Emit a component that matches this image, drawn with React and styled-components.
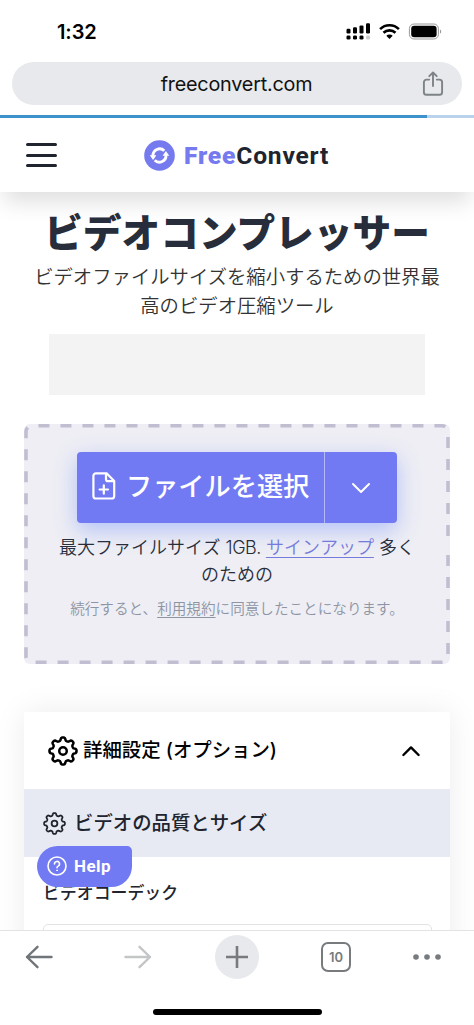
import React, { useState } from "react";
import styled, { createGlobalStyle, css } from "styled-components";

const GlobalStyle = createGlobalStyle`
  * {
    box-sizing: border-box;
  }

  body {
    margin: 0;
    background: #fff;
    font-family: "Inter", "Noto Sans CJK JP", sans-serif;
  }

  svg {
    display: block;
    flex: none;
  }
`;

const Screen = styled.div`
  display: flex;
  flex-direction: column;
  width: 474px;
  height: 1025px;
  overflow: hidden;
  background: #fff;
`;

/* browser chrome, top */

const StatusBar = styled.div`
  display: flex;
  align-items: center;
  justify-content: space-between;
  height: 62px;
  padding: 1px 32px 0 57px;
`;

const Clock = styled.div`
  font-size: 20px;
  font-weight: 600;
  letter-spacing: -0.1px;
  color: #000;
`;

const AddressBar = styled.div`
  display: flex;
  align-items: center;
  justify-content: center;
  height: 43px;
  margin: 0 12px;
  padding: 0 18px 0 39px;
  border-radius: 22px;
  background: #e7e9ec;
`;

const Address = styled.div`
  flex: 1;
  text-align: center;
  font-size: 19.8px;
  letter-spacing: -0.2px;
  color: #111;
`;

const Progress = styled.div`
  height: 3px;
  margin-top: 10px;
  background: #b9d3ec;
`;

const ProgressFill = styled.div`
  height: 100%;
  background: #3d92cb;
`;

/* page */

const Page = styled.main`
  position: relative;
  flex: 1;
  min-height: 0;
  overflow: hidden;
`;

const SiteHeader = styled.header`
  display: flex;
  align-items: center;
  height: 74px;
  padding: 0 26px;
  background: #fff;
  box-shadow: 0 14px 22px -4px rgba(0, 0, 0, 0.13);
`;

const MenuButton = styled.button`
  display: flex;
  flex-direction: column;
  justify-content: space-between;
  width: 31px;
  height: 24px;
  padding: 0;
  border: 0;
  background: none;

  span {
    height: 3px;
    border-radius: 2px;
    background: #20242e;
  }
`;

const Logo = styled.div`
  display: flex;
  align-items: center;
  gap: 9px;
  margin-left: 87px;
  font-family: "Roboto", sans-serif;
  font-size: 24.6px;
  font-weight: 700;
  letter-spacing: 0.8px;
  color: #20242e;

  b {
    color: #757bee;
  }
`;

const Hero = styled.section`
  display: flex;
  flex-direction: column;
  align-items: center;
  padding-top: 13px;
  text-align: center;
`;

const Title = styled.h1`
  margin: 0;
  font-size: 38.7px;
  font-weight: 900;
  line-height: 56px;
  color: #282d3b;
`;

const Subtitle = styled.p`
  width: 412px;
  margin: 2px 0 0;
  font-size: 19.35px;
  font-weight: 350;
  line-height: 29px;
  color: #333;
`;

const AdSlot = styled.div`
  width: 376px;
  height: 61px;
  margin-top: 13px;
  background: #f3f3f3;
`;

const DropZone = styled.section`
  position: relative;
  display: flex;
  flex-direction: column;
  align-items: center;
  width: 426px;
  height: 240px;
  margin: 29px auto 0;
  padding-top: 28px;
  border-radius: 6px;
  background: #eeeef4;
  text-align: center;
`;

const DashedOutline = styled.svg`
  position: absolute;
  inset: 0;
`;

const UploadButton = styled.div`
  display: flex;
  width: 320px;
  height: 71px;
  border-radius: 4px;
  background: #727af3;
  color: #fff;
  box-shadow: 0 7px 22px rgba(98, 130, 255, 0.42);
`;

const ChooseFile = styled.div`
  display: flex;
  align-items: center;
  gap: 10px;
  width: 248px;
  padding-left: 15px;
  border-right: 1px solid #b4b9fa;
  font-size: 26.2px;
  font-weight: 500;
  white-space: nowrap;

  span {
    margin-top: -6px;
  }

  svg {
    margin-top: -3px;
  }
`;

const MoreSources = styled.div`
  display: flex;
  flex: 1;
  align-items: center;
  justify-content: center;
`;

const Limits = styled.p`
  width: 364px;
  margin: 12px 0 0;
  font-size: 18px;
  font-weight: 350;
  line-height: 26.5px;
  color: #282d3b;
`;

const Size = styled.span`
  letter-spacing: -0.5px;
`;

const Terms = styled.p`
  margin: 10px 0 0;
  font-size: 14.6px;
  font-weight: 350;
  line-height: 22px;
  color: #8d94a3;
`;

const Link = styled.a`
  text-decoration: underline;
  text-decoration-thickness: 1px;
  text-underline-offset: 3px;
  ${(props) =>
    props.$accent &&
    css`
      color: #757bda;
    `}
`;

const Card = styled.section`
  width: 426px;
  height: 400px;
  margin: 48px auto 0;
  background: #fff;
  box-shadow: 0 0 30px rgba(0, 0, 0, 0.08);
`;

const CardHeader = styled.div`
  display: flex;
  align-items: center;
  height: 77px;
  padding: 0 29px 0 24px;
  font-size: 19.4px;
  font-weight: 500;
  color: #000;

  span {
    flex: 1;
    margin: -5px 0 0 5px;
  }
`;

const SectionHeader = styled.div`
  display: flex;
  align-items: center;
  gap: 8px;
  height: 68px;
  padding-left: 19px;
  background: #e7eaf2;
  font-size: 19.4px;
  font-weight: 500;
  color: #20242e;

  span {
    margin-top: -4px;
  }
`;

const Field = styled.label`
  display: block;
  padding: 24px 18px 0 19px;
  font-size: 16.9px;
  font-weight: 500;
  line-height: 25px;
  color: #20242e;
`;

const Select = styled.div`
  height: 50px;
  margin-top: 18px;
  border: 1px solid #e3e3e6;
  border-radius: 5px;
`;

const HelpButton = styled.button`
  position: absolute;
  left: 37px;
  bottom: 43px;
  display: flex;
  align-items: center;
  gap: 7px;
  width: 95px;
  height: 41px;
  padding: 0 0 2px 10px;
  border: 0;
  border-radius: 21px 5px 21px 21px;
  background: #727af3;
  color: #fff;
  font-family: "Roboto", sans-serif;
  font-size: 17px;
  font-weight: 700;
  letter-spacing: 0.4px;
`;

/* browser chrome, bottom */

const Toolbar = styled.nav`
  display: flex;
  flex-direction: column;
  align-items: center;
  height: 95px;
  border-top: 1px solid #e3e3e5;
  background: #fff;
`;

const ToolbarRow = styled.div`
  display: grid;
  grid-template-columns: 77px 122px 76px 122px 60px;
  align-items: center;
  justify-items: center;
  width: 100%;
  padding-top: 4px;
`;

const NewTab = styled.div`
  display: flex;
  align-items: center;
  justify-content: center;
  width: 44px;
  height: 44px;
  border-radius: 50%;
  background: #e8e9ed;
`;

const TabCount = styled.div`
  display: flex;
  align-items: center;
  justify-content: center;
  width: 30px;
  height: 30px;
  border: 2px solid #777b7e;
  border-radius: 7px;
  font-size: 13px;
  font-weight: 600;
  color: #777b7e;
`;

const HomeIndicator = styled.div`
  width: 169px;
  height: 6px;
  margin-top: 30px;
  border-radius: 3px;
  background: #000;
`;

function gearPath(size) {
  const points = [];
  for (let i = 0; i < 160; i++) {
    const t = (i / 160) * Math.PI * 2;
    const r = size * (0.4 + 0.054 * Math.tanh(1.9 * Math.cos(8 * t)));
    const x = size / 2 + r * Math.sin(t);
    const y = size / 2 - r * Math.cos(t);
    points.push(`${x.toFixed(2)} ${y.toFixed(2)}`);
  }
  return `M${points.join("L")}Z`;
}

function GearIcon({ size, stroke }) {
  return (
    <svg
      width={size}
      height={size}
      fill="none"
      stroke="currentColor"
      strokeWidth={stroke}
      strokeLinejoin="round"
    >
      <path d={gearPath(size)} />
      <circle cx={size / 2} cy={size / 2} r={size * 0.125} />
    </svg>
  );
}

function StatusIcons() {
  return (
    <svg width="96" height="18" viewBox="0 0 96 18">
      <g>
        <rect x="0.5" y="5.8" width="4" height="4.6" rx="1.2" />
        <rect x="7" y="4.3" width="4" height="6.1" rx="1.2" />
        <rect x="13.5" y="2.4" width="4" height="8" rx="1.2" />
        <rect x="20" y="0.2" width="4" height="10.2" rx="1.2" />
        <rect x="0.5" y="12.4" width="4" height="4.2" rx="1.4" />
        <rect x="7" y="12.4" width="4" height="4.2" rx="1.4" />
        <rect x="13.5" y="12.4" width="4" height="4.2" rx="1.4" />
        <rect x="20" y="12.4" width="4" height="4.2" rx="1.4" fill="#ccc" />
      </g>
      <g fill="none" stroke="#000" strokeWidth="2.6">
        <path d="M34.1 6.1a13.4 13.4 0 0 1 18.8 0" />
        <path d="M37.5 9.8a8.6 8.6 0 0 1 12 0" />
      </g>
      <path d="M40.3 12.8a4.6 4.6 0 0 1 6.4 0l-3.2 3.2z" />
      <rect
        x="63.4"
        y="1"
        width="29"
        height="15"
        rx="4.6"
        fill="none"
        stroke="#999"
      />
      <rect x="65.2" y="2.8" width="25.4" height="11.4" rx="3" />
      <path d="M94 6.4c1.6.6 1.6 3.6 0 4.2z" fill="#999" />
    </svg>
  );
}

function ShareIcon() {
  return (
    <svg
      width="22"
      height="26"
      fill="none"
      stroke="#7e8387"
      strokeWidth="1.9"
      strokeLinecap="round"
      strokeLinejoin="round"
    >
      <path d="M7.2 8.6H4.500a2.600 2.600 0 0 0-2.600 2.600v10a2.600 2.600 0 0 0 2.600 2.600h13a2.600 2.600 0 0 0 2.600-2.600v-10a2.600 2.600 0 0 0-2.600-2.600h-2.700" />
      <path d="M11 15V1.8M7.3 5.2 11 1.5l3.7 3.7" />
    </svg>
  );
}

function LogoMark() {
  return (
    <svg width="31" height="31" viewBox="0 0 31 31">
      <circle cx="15.5" cy="15.5" r="15.3" fill="#757bee" />
      <g fill="none" stroke="#fff" strokeWidth="2.8">
        <path d="M9 16a6.700 6.700 0 0 1 11.300-5.300" />
        <path d="M22 15a6.700 6.700 0 0 1-11.300 5.300" />
      </g>
      <path d="M5.800 15.200h6.600l-3.300 4.800z" fill="#fff" />
      <path d="M25.200 15.800h-6.600l3.300-4.800z" fill="#fff" />
    </svg>
  );
}

function FilePlusIcon() {
  return (
    <svg
      width="24"
      height="28"
      fill="none"
      stroke="#fff"
      strokeWidth="2.2"
      strokeLinecap="round"
      strokeLinejoin="round"
    >
      <path d="M14.6 1.3H4a2.6 2.6 0 0 0-2.6 2.6v20A2.6 2.6 0 0 0 4 26.5h15.6a2.6 2.6 0 0 0 2.6-2.6V9z" />
      <path d="M14 1.8V7.2a2 2 0 0 0 2 2h5.8M11.8 13.3v8.4M7.6 17.5H16" />
    </svg>
  );
}

function Chevron({ up, width = 2 }) {
  return (
    <svg
      width="20"
      height="12"
      fill="none"
      stroke="currentColor"
      strokeWidth={width}
      strokeLinecap="round"
      strokeLinejoin="round"
    >
      <path d={up ? "M2.4 10 10 2.4 17.6 10" : "M2 2 10 10 18 2"} />
    </svg>
  );
}

function HelpIcon() {
  return (
    <svg
      width="20"
      height="20"
      fill="none"
      stroke="#fff"
      strokeWidth="1.6"
      strokeLinecap="round"
    >
      <circle cx="10" cy="10" r="9" />
      <path d="M7.5 7.9a2.5 2.5 0 1 1 3.7 2.2c-.8.4-1.2.9-1.2 1.7" />
      <circle cx="10" cy="14.3" r=".4" fill="#fff" strokeWidth="1" />
    </svg>
  );
}

function ArrowIcon({ right, color }) {
  return (
    <svg
      width="28"
      height="24"
      fill="none"
      stroke={color}
      strokeWidth="2.4"
      strokeLinecap="round"
      strokeLinejoin="round"
    >
      <path
        d={
          right
            ? "M1.5 12H26M15.5 1.8 26 12 15.5 22.2"
            : "M26.5 12H2M12.5 1.8 2 12l10.5 10.2"
        }
      />
    </svg>
  );
}

export default function App() {
  const [progress] = useState(90);

  return (
    <Screen>
      <GlobalStyle />
      <StatusBar>
        <Clock>1:32</Clock>
        <StatusIcons />
      </StatusBar>
      <AddressBar>
        <Address>freeconvert.com</Address>
        <ShareIcon />
      </AddressBar>
      <Progress>
        <ProgressFill style={{ width: `${progress}%` }} />
      </Progress>

      <Page>
        <SiteHeader>
          <MenuButton aria-label="Menu">
            <span />
            <span />
            <span />
          </MenuButton>
          <Logo>
            <LogoMark />
            <div>
              <b>Free</b>Convert
            </div>
          </Logo>
        </SiteHeader>

        <Hero>
          <Title>ビデオコンプレッサー</Title>
          <Subtitle>
            ビデオファイルサイズを縮小するための世界最高のビデオ圧縮ツール
          </Subtitle>
          <AdSlot />
        </Hero>

        <DropZone>
          <DashedOutline width="426" height="240">
            <path
              d="M424 131V232.4a6 6 0 0 1-6 6H8a6 6 0 0 1-6-6V7.8a6 6 0 0 1 6-6H418a6 6 0 0 1 6 6V112"
              fill="none"
              stroke="#c1bed2"
              strokeWidth="3.6"
              strokeDasharray="11 11"
            />
          </DashedOutline>
          <UploadButton>
            <ChooseFile>
              <FilePlusIcon />
              <span>ファイルを選択</span>
            </ChooseFile>
            <MoreSources>
              <Chevron />
            </MoreSources>
          </UploadButton>
          <Limits>
            最大ファイルサイズ <Size>1GB.</Size>{" "}
            <Link $accent>サインアップ</Link> 多く
            <br />
            のための
          </Limits>
          <Terms>
            続行すると、<Link>利用規約</Link>に同意したことになります。
          </Terms>
        </DropZone>

        <Card>
          <CardHeader>
            <GearIcon size={30} stroke={2.5} />
            <span>詳細設定 (オプション)</span>
            <Chevron up width={2.4} />
          </CardHeader>
          <SectionHeader>
            <GearIcon size={23} stroke={1.8} />
            <span>ビデオの品質とサイズ</span>
          </SectionHeader>
          <Field>
            ビデオコーデック
            <Select />
          </Field>
        </Card>

        <HelpButton>
          <HelpIcon />
          Help
        </HelpButton>
      </Page>

      <Toolbar>
        <ToolbarRow>
          <ArrowIcon color="#707579" />
          <ArrowIcon right color="#c4c5c7" />
          <NewTab>
            <svg width="22" height="22" stroke="#777b7e" strokeWidth="2.6">
              <path d="M11 0v22M0 11h22" />
            </svg>
          </NewTab>
          <TabCount>10</TabCount>
          <svg width="28" height="6" fill="#777b7e">
            <circle cx="3" cy="3" r="2.8" />
            <circle cx="14" cy="3" r="2.8" />
            <circle cx="25" cy="3" r="2.8" />
          </svg>
        </ToolbarRow>
        <HomeIndicator />
      </Toolbar>
    </Screen>
  );
}
